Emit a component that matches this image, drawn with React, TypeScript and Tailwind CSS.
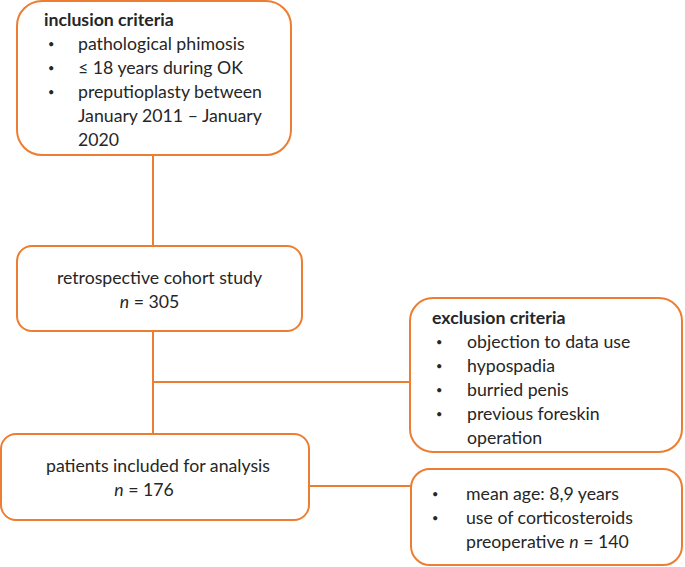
const orange = "border-[#ED7D31]"

function Bullet({ children, textLeft }: { children: React.ReactNode; textLeft: string }) {
  return (
    <div className="flex">
      <span className={`${textLeft} shrink-0 text-[11px]`}>•</span>
      <span>{children}</span>
    </div>
  )
}

export default function App() {
  return (
    <div
      className="relative w-[685px] h-[567px] bg-white text-[#262626] text-[17.7px] leading-[24px]"
      style={{ fontFamily: "Lato, 'Open Sans', sans-serif" }}
    >
      {/* connectors */}
      <div className="absolute left-[152px] top-[155px] w-[1.5px] h-[91px] bg-[#ED7D31]" />
      <div className="absolute left-[152px] top-[331px] w-[1.5px] h-[103px] bg-[#ED7D31]" />
      <div className="absolute left-[152px] top-[381px] w-[258px] h-[1.5px] bg-[#ED7D31]" />
      <div className="absolute left-[309px] top-[485px] w-[102px] h-[1.5px] bg-[#ED7D31]" />

      {/* inclusion criteria */}
      <div className={`absolute left-[16px] top-0 w-[276px] h-[156px] rounded-[26px] border-2 ${orange} bg-white pl-[26px] pt-[6px]`}>
        <div className="font-bold">inclusion criteria</div>
        <Bullet textLeft="w-[34px] pl-[4px]">pathological phimosis</Bullet>
        <Bullet textLeft="w-[34px] pl-[4px]">≤ 18 years during OK</Bullet>
        <Bullet textLeft="w-[34px] pl-[4px]">
          preputioplasty between
          <br />
          January 2011 – January
          <br />
          2020
        </Bullet>
      </div>

      {/* cohort */}
      <div className={`absolute left-[16px] top-[245px] w-[287px] h-[87px] rounded-[16px] border-2 ${orange} bg-white flex flex-col items-center justify-center pt-[3px]`}>
        <div>retrospective cohort study</div>
        <div className="pr-[20px]">
          <i>n</i> = 305
        </div>
      </div>

      {/* exclusion criteria */}
      <div className={`absolute left-[409px] top-[297px] w-[274px] h-[156px] rounded-[24px] border-2 ${orange} bg-white pl-[21px] pt-[7px]`}>
        <div className="font-bold">exclusion criteria</div>
        <Bullet textLeft="w-[35px] pl-[4px]">objection to data use</Bullet>
        <Bullet textLeft="w-[35px] pl-[4px]">hypospadia</Bullet>
        <Bullet textLeft="w-[35px] pl-[4px]">burried penis</Bullet>
        <Bullet textLeft="w-[35px] pl-[4px]">
          previous foreskin
          <br />
          operation
        </Bullet>
      </div>

      {/* patients */}
      <div className={`absolute left-0 top-[433px] w-[310px] h-[88px] rounded-[16px] border-2 ${orange} bg-white flex flex-col items-center justify-center pt-[2px]`}>
        <div className="pl-[6px]">patients included for analysis</div>
        <div className="pr-[22px]">
          <i>n</i> = 176
        </div>
      </div>

      {/* summary */}
      <div className={`absolute left-[410px] top-[468px] w-[273px] h-[98px] rounded-[20px] border-2 ${orange} bg-white pl-[20px] pt-[12px]`}>
        <Bullet textLeft="w-[34px]">mean age: 8,9 years</Bullet>
        <Bullet textLeft="w-[34px]">
          use of corticosteroids
          <br />
          preoperative <i>n</i> = 140
        </Bullet>
      </div>
    </div>
  )
}
